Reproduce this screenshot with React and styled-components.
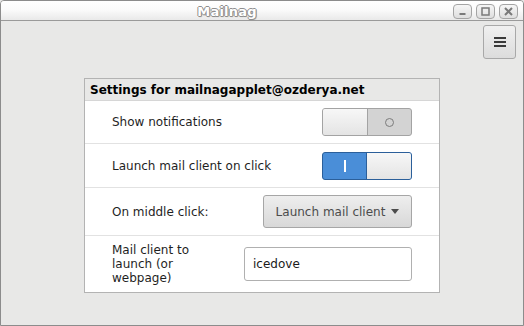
import React, { useState } from 'react';
import styled, { createGlobalStyle } from 'styled-components';

const GlobalStyle = createGlobalStyle`
  html, body {
    margin: 0;
    padding: 0;
    background: #e8e8e7;
  }
  body {
    font-family: "DejaVu Sans", "Liberation Sans", sans-serif;
    font-size: 12px;
    color: #2e3436;
  }
`;

const Window = styled.div`
  width: 524px;
  height: 326px;
  box-sizing: border-box;
  border: 1px solid #8c8c8c;
  border-radius: 4px 4px 0 0;
  background: #e8e8e7;
  display: flex;
  flex-direction: column;
  overflow: hidden;
`;

const TitleBar = styled.div`
  height: 19px;
  flex: none;
  border-bottom: 1px solid #9a9a9a;
  background: linear-gradient(#ffffff 0%, #fbfbfb 45%, #e9e9e9 100%);
  display: flex;
  align-items: flex-start;
  justify-content: flex-end;
  padding-right: 5px;
  gap: 4px;
  position: relative;
`;

const Title = styled.div`
  position: absolute;
  left: 0;
  right: 0;
  top: 3px;
  text-align: center;
  font-weight: bold;
  font-size: 13px;
  color: #ffffff;
  letter-spacing: 0.2px;
  text-shadow: 1px 0 0 #8e8e8e, -1px 0 0 #8e8e8e, 0 1px 0 #8e8e8e, 0 -1px 0 #8e8e8e,
    1px 1px 1px #9a9a9a;
  pointer-events: none;
  padding-right: 70px;
`;

const WinButton = styled.div`
  width: 19px;
  height: 15px;
  box-sizing: border-box;
  border: 1px solid #a4a4a4;
  border-radius: 4px;
  background: linear-gradient(#f6f6f6, #dedede);
  display: flex;
  align-items: center;
  justify-content: center;
  margin-top: 3px;
`;

const Body = styled.div`
  flex: 1;
  display: flex;
  flex-direction: column;
`;

const Toolbar = styled.div`
  display: flex;
  justify-content: flex-end;
  padding: 4px 7px 0 0;
`;

const MenuButton = styled.div`
  width: 33px;
  height: 34px;
  box-sizing: border-box;
  border: 1px solid #a8a8a8;
  border-radius: 3px;
  background: linear-gradient(#f0f0f0, #dcdcdc);
  display: flex;
  align-items: center;
  justify-content: center;
`;

const Panel = styled.div`
  align-self: center;
  width: 356px;
  box-sizing: border-box;
  margin-top: 19px;
  border: 1px solid #b3b3b3;
  background: #ffffff;
`;

const PanelHeader = styled.div`
  height: 21px;
  background: #e8e8e7;
  border-bottom: 1px solid #d6d6d6;
  font-weight: bold;
  font-size: 12px;
  color: #000;
  padding-left: 5px;
  display: flex;
  align-items: center;
`;

const Row = styled.div`
  height: ${p => p.$h}px;
  display: flex;
  align-items: center;
  justify-content: space-between;
  padding: 0 27px 0 27px;
  border-top: ${p => (p.$first ? 'none' : '1px solid #e2e2e2')};
`;

const Label = styled.div`
  color: #1f1f1f;
  line-height: 14px;
  width: ${p => (p.$w ? `${p.$w}px` : 'auto')};
`;

const Toggle = styled.div`
  width: 90px;
  height: 28px;
  box-sizing: border-box;
  border: 1px solid ${p => (p.$on ? '#2b5f9a' : '#a3a3a3')};
  border-radius: 3px;
  background: ${p => (p.$on ? '#4a8ed8' : '#d3d3d3')};
  display: flex;
  flex-direction: ${p => (p.$on ? 'row' : 'row-reverse')};
  overflow: hidden;
  cursor: pointer;
`;

const ToggleSide = styled.div`
  flex: 1;
  display: flex;
  align-items: center;
  justify-content: center;
`;

const Knob = styled.div`
  width: 45px;
  height: 100%;
  box-sizing: border-box;
  border-${p => (p.$on ? 'left' : 'right')}: 1px solid ${p => (p.$on ? '#2b5f9a' : '#a3a3a3')};
  background: linear-gradient(#f7f7f7, #e4e4e4);
`;

const OnMark = styled.div`
  width: 2px;
  height: 12px;
  background: #ffffff;
`;

const OffMark = styled.div`
  width: 7px;
  height: 7px;
  border: 1px solid #7c7c7c;
  border-radius: 50%;
`;

const Dropdown = styled.div`
  width: 149px;
  height: 33px;
  box-sizing: border-box;
  border: 1px solid #a6a6a6;
  border-radius: 3px;
  background: linear-gradient(#eeeeee, #d8d8d8);
  display: flex;
  align-items: center;
  justify-content: center;
  gap: 6px;
  color: #4c4c4c;
  font-size: 12px;
`;

const Entry = styled.div`
  width: 168px;
  height: 34px;
  box-sizing: border-box;
  border: 1px solid #b0b0b0;
  border-radius: 3px;
  background: #ffffff;
  display: flex;
  align-items: center;
  padding-left: 8px;
  color: #1a1a1a;
`;

export default function App() {
  const [notify, setNotify] = useState(false);
  const [launch, setLaunch] = useState(true);

  return (
    <>
      <GlobalStyle />
      <Window>
        <TitleBar>
          <Title>Mailnag</Title>
          <WinButton>
            <svg width="11" height="9" viewBox="0 0 11 9">
              <rect x="2.5" y="6" width="6" height="2" fill="#7a7a7a" />
            </svg>
          </WinButton>
          <WinButton>
            <svg width="11" height="9" viewBox="0 0 11 9">
              <rect x="2" y="1" width="7" height="7" fill="none" stroke="#7a7a7a" strokeWidth="1.5" />
            </svg>
          </WinButton>
          <WinButton>
            <svg width="11" height="9" viewBox="0 0 11 9">
              <path d="M2 1 L9 8 M9 1 L2 8" stroke="#7a7a7a" strokeWidth="2" />
            </svg>
          </WinButton>
        </TitleBar>
        <Body>
          <Toolbar>
            <MenuButton>
              <svg width="12" height="12" viewBox="0 0 12 12">
                <rect x="0" y="1" width="12" height="2" fill="#3a3a3a" />
                <rect x="0" y="5" width="12" height="2" fill="#3a3a3a" />
                <rect x="0" y="9" width="12" height="2" fill="#3a3a3a" />
              </svg>
            </MenuButton>
          </Toolbar>
          <Panel>
            <PanelHeader>Settings for mailnagapplet@ozderya.net</PanelHeader>
            <Row $h={42} $first>
              <Label>Show notifications</Label>
              <Toggle $on={notify} onClick={() => setNotify(!notify)}>
                <ToggleSide>{notify ? <OnMark /> : <OffMark />}</ToggleSide>
                <Knob $on={notify} />
              </Toggle>
            </Row>
            <Row $h={43}>
              <Label>Launch mail client on click</Label>
              <Toggle $on={launch} onClick={() => setLaunch(!launch)}>
                <ToggleSide>{launch ? <OnMark /> : <OffMark />}</ToggleSide>
                <Knob $on={launch} />
              </Toggle>
            </Row>
            <Row $h={47}>
              <Label>On middle click:</Label>
              <Dropdown>
                Launch mail client
                <svg width="8" height="5" viewBox="0 0 8 5">
                  <path d="M0 0 L8 0 L4 5 Z" fill="#4c4c4c" />
                </svg>
              </Dropdown>
            </Row>
            <Row $h={56}>
              <Label $w={110}>Mail client to launch (or webpage)</Label>
              <Entry>icedove</Entry>
            </Row>
          </Panel>
        </Body>
      </Window>
    </>
  );
}
